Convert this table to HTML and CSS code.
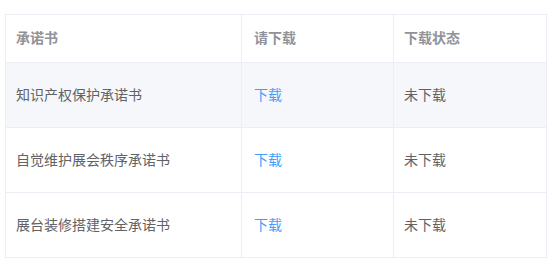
FILE: index.html
```html
<!DOCTYPE html>
<html lang="zh">
<head>
<meta charset="utf-8">
<link rel="stylesheet" href="styles.css">
</head>
<body>
<div class="wrap">
  <table class="tbl">
    <colgroup>
      <col class="c1"><col class="c2"><col class="c3">
    </colgroup>
    <thead>
      <tr><th>承诺书</th><th>请下载</th><th>下载状态</th></tr>
    </thead>
    <tbody>
      <tr class="hover"><td>知识产权保护承诺书</td><td><a class="link">下载</a></td><td>未下载</td></tr>
      <tr><td>自觉维护展会秩序承诺书</td><td><a class="link">下载</a></td><td>未下载</td></tr>
      <tr><td>展台装修搭建安全承诺书</td><td><a class="link">下载</a></td><td>未下载</td></tr>
    </tbody>
  </table>
</div>
</body>
</html>
```
FILE: styles.css
```css
html, body { margin: 0; padding: 0; background: #fff; }
body {
  font-family: "Noto Sans CJK SC", "Liberation Sans", sans-serif;
  font-size: 14px;
  color: #606266;
}
.wrap { padding: 14px 8px 0 5px; }
.tbl {
  border-collapse: collapse;
  table-layout: fixed;
  width: 541px;
  border: 1px solid #ebeef5;
}
.c1 { width: 236px; }
.c2 { width: 152px; }
.c3 { width: 153px; }
.tbl th, .tbl td {
  border: 1px solid #ebeef5;
  text-align: left;
  padding: 0 0 3px 10px;
  line-height: 20px;
}
.tbl th {
  height: 44px;
  color: #909399;
  font-weight: bold;
}
.tbl th:nth-child(2), .tbl td:nth-child(2) { padding-left: 12px; }
.tbl td { height: 61px; }
.tbl tr.hover td { background: #f5f7fa; }
.link { color: #409eff; cursor: pointer; }
```
